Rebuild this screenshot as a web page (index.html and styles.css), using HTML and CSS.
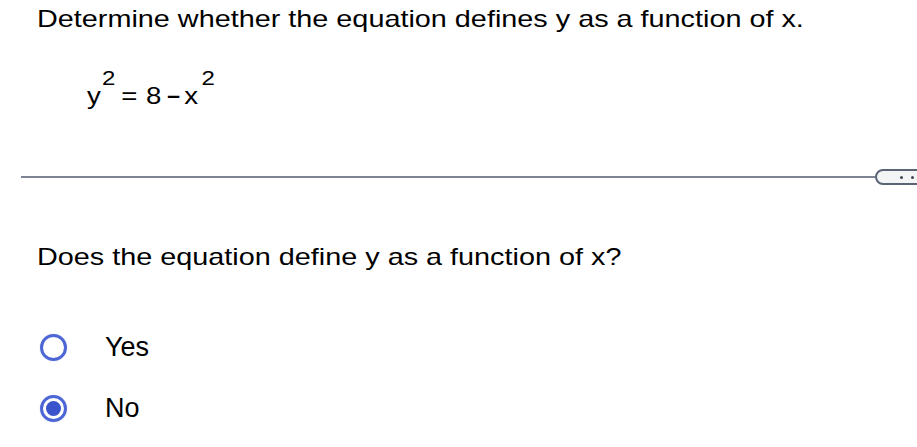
FILE: index.html
```html
<!DOCTYPE html>
<html lang="en">
<head>
<meta charset="utf-8">
<title>Function question</title>
<link rel="stylesheet" href="styles.css">
</head>
<body>
<main class="page">
  <h1 class="prompt"><span class="stretch">Determine whether the equation defines y as a function of x.</span></h1>
  <div class="equation"><span class="stretch"><span class="var">y</span><sup class="sup sup-first">2</sup><span class="op op-eq">=</span><span class="num">8</span><span class="op op-minus">−</span><span class="var var-x">x</span><sup class="sup sup-last">2</sup></span></div>
  <div class="divider">
    <div class="rule"></div>
    <div class="pill"><span class="dot"></span><span class="dot"></span></div>
  </div>
  <p class="question"><span class="stretch">Does the equation define y as a function of x?</span></p>
  <ul class="options">
    <li class="option"><span class="radio"></span><span class="label">Yes</span></li>
    <li class="option"><span class="radio checked"></span><span class="label">No</span></li>
  </ul>
</main>
</body>
</html>
```
FILE: styles.css
```css
html, body {
  margin: 0;
  padding: 0;
  background: #ffffff;
  overflow: hidden;
}
body {
  width: 917px;
  height: 447px;
  font-family: "Liberation Sans", Arial, sans-serif;
  color: #000;
}
.page {
  display: flex;
  flex-direction: column;
}
.stretch {
  display: inline-block;
  white-space: nowrap;
  transform: scaleX(1.2);
  transform-origin: 0 50%;
}
.prompt {
  margin: 0;
  padding: 5px 0 0 37px;
  font-size: 24px;
  font-weight: normal;
  line-height: 28px;
}
.equation {
  margin-top: 45px;
  padding-left: 87px;
  font-size: 23px;
  line-height: 28px;
  height: 28px;
}
.sup {
  font-size: 20px;
  line-height: 0;
  vertical-align: 19px;
}
.sup-first { margin-left: 1px; }
.sup-last { margin-left: 3px; }
.op-eq { margin-left: 5px; }
.num { margin-left: 7px; }
.op-minus {
  margin-left: 4.5px;
  font-size: 19px;
  font-weight: bold;
  vertical-align: 1.5px;
}
.var-x { margin-left: 3.5px; }
.divider {
  margin-top: 63px;
  padding-left: 21px;
  display: flex;
  align-items: center;
  height: 16px;
}
.rule {
  flex: 1;
  height: 2px;
  background: #7d8595;
}
.pill {
  width: 62px;
  height: 16px;
  margin-right: -20px;
  box-sizing: border-box;
  border: 2px solid #5b6474;
  border-radius: 8px;
  background: #f3f4f6;
  display: flex;
  align-items: center;
  gap: 8px;
  padding-left: 23px;
}
.dot {
  width: 3px;
  height: 3px;
  border-radius: 50%;
  background: #3f4652;
}
.question {
  margin: 58px 0 0 0;
  padding-left: 37px;
  font-size: 24px;
  line-height: 28px;
}
.options {
  list-style: none;
  margin: 61px 0 0 0;
  padding: 0 0 0 40px;
  display: flex;
  flex-direction: column;
  gap: 31px;
}
.option {
  display: flex;
  align-items: center;
  gap: 38px;
  height: 30px;
}
.radio {
  width: 27px;
  height: 27px;
  box-sizing: border-box;
  border: 3px solid #4d66d6;
  border-radius: 50%;
  display: flex;
  align-items: center;
  justify-content: center;
  box-shadow: 0 0 1px rgba(77, 102, 214, 0.5);
}
.radio.checked::after {
  content: "";
  width: 15px;
  height: 15px;
  border-radius: 50%;
  background: #3a55cc;
}
.label {
  font-size: 27px;
  line-height: 30px;
}
```
